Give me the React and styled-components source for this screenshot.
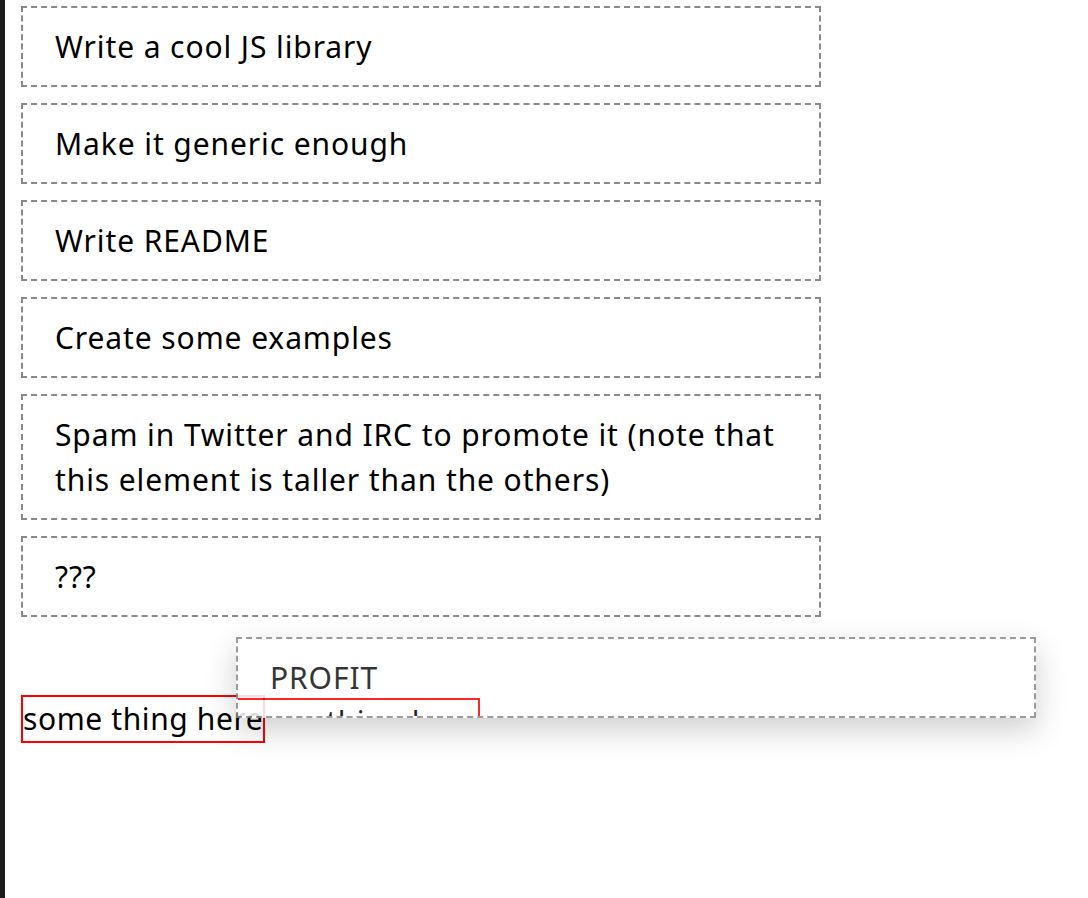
import React from "react";
import styled, { createGlobalStyle } from "styled-components";

const items = [
  "Write a cool JS library",
  "Make it generic enough",
  "Write README",
  "Create some examples",
  "Spam in Twitter and IRC to promote it (note that this element is taller than the others)",
  "???",
];

const App = () => (
  <>
    <GlobalStyle />
    <Page>
      <List>
        {items.map((text) => (
          <Item key={text}>{text}</Item>
        ))}
      </List>
      <Tag>some thing here</Tag>
      <DragHelper>
        PROFIT
        <HelperTag>some thing here</HelperTag>
      </DragHelper>
    </Page>
  </>
);

//===== Styles
const GlobalStyle = createGlobalStyle`
  html, body {
    margin: 0;
    background: #fff;
  }
  body {
    font-family: "Noto Sans", "Liberation Sans", Arial, sans-serif;
    color: #000;
  }
  * {
    box-sizing: border-box;
  }
`;

const Page = styled.div`
  position: relative;
  min-height: 100vh;
  border-left: 5px solid #1c1c1c;
  padding: 6px 16px;
`;

const List = styled.ul`
  list-style: none;
  margin: 0;
  padding: 0;
  width: 800px;
  display: flex;
  flex-direction: column;
  row-gap: 16px;
`;

const Item = styled.li`
  border: 2px dashed #8a8a8a;
  background: #fff;
  padding: 16px 32px;
  font-size: 30px;
  line-height: 45px;
  letter-spacing: 0.9px;
`;

const Tag = styled.div`
  display: inline-block;
  margin-top: 78px;
  border: 2px solid #ff0000;
  font-size: 30px;
  line-height: 44px;
  letter-spacing: 0.6px;
  white-space: nowrap;
`;

const DragHelper = styled(Item).attrs({ as: "div" })`
  position: absolute;
  left: 231px;
  top: 637px;
  width: 800px;
  height: 81px;
  overflow: hidden;
  opacity: 0.85;
  color: #111;
  box-shadow: 0 12px 30px rgba(0, 0, 0, 0.22);
`;

const HelperTag = styled(Tag)`
  position: absolute;
  left: -2px;
  top: 59px;
  margin: 0;
  color: #000;
`;

export default App;
